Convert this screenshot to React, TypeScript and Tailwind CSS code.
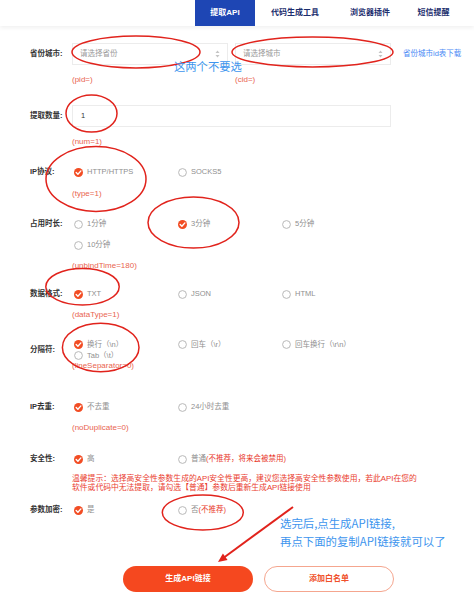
import React from 'react';

const BASE = "[font-family:'Liberation_Sans','Noto_Sans_CJK_SC',sans-serif]";
const NOTE = "[font-family:'Noto_Sans_CJK_SC',sans-serif]";

const tabs = [
  { name: '提取API', w: 'w-[60px]', active: true },
  { name: '代码生成工具', w: 'w-[80px]', active: false },
  { name: '浏览器插件', w: 'w-[70px]', active: false },
  { name: '短信提醒', w: 'w-[57px]', active: false },
];

function Radio({ checked, label, extra }: { checked?: boolean; label: string; extra?: React.ReactNode }) {
  return (
    <div className="flex items-center gap-[4px] pl-[2px]">
      {checked ? (
        <svg width="9" height="9" viewBox="0 0 9 9" className="shrink-0">
          <circle cx="4.5" cy="4.5" r="4.5" fill="#f24d24" />
          <path d="M2.2 4.6 L3.9 6.2 L6.9 2.9" stroke="#fff" strokeWidth="1.4" fill="none" strokeLinecap="round" strokeLinejoin="round" />
        </svg>
      ) : (
        <svg width="9" height="9" viewBox="0 0 9 9" className="shrink-0">
          <circle cx="4.5" cy="4.5" r="3.9" fill="#fff" stroke="#b8b8b8" strokeWidth="1" />
        </svg>
      )}
      <span className="text-[7.5px] text-[#8f8f8f] whitespace-nowrap">
        {label}
        {extra}
      </span>
    </div>
  );
}

function Label({ children }: { children: React.ReactNode }) {
  return (
    <div className="w-[42px] shrink-0 h-[12px] flex items-center text-[7.5px] font-bold text-[#333] whitespace-nowrap">
      {children}
    </div>
  );
}

function Hint({ children, className = '' }: { children: React.ReactNode; className?: string }) {
  return <div className={`pl-[42px] h-[12px] leading-[12px] text-[8px] text-[#e9644f] ${className}`}>{children}</div>;
}

function SelectBox({ placeholder }: { placeholder: string }) {
  return (
    <div className="w-[156px] h-[22px] border border-[#ececec] bg-white flex items-center justify-between pl-[7px] pr-[7px]">
      <span className="text-[7.5px] text-[#9a9a9a]">{placeholder}</span>
      <svg width="5" height="8" viewBox="0 0 5 8">
        <path d="M2.5 0.5 L4.5 3 L0.5 3 Z" fill="#c4c4c4" />
        <path d="M2.5 7.5 L4.5 5 L0.5 5 Z" fill="#c4c4c4" />
      </svg>
    </div>
  );
}

export default function App() {
  return (
    <div className={`relative w-[474px] h-[601px] overflow-hidden bg-white ${BASE}`}>
      {/* top nav */}
      <div className="h-[26px] flex pl-[195px] shadow-[0_2px_4px_rgba(0,0,0,0.06)]">
        {tabs.map((t) => (
          <div
            key={t.name}
            className={`${t.w} h-full flex items-center justify-center text-[8px] font-bold ${
              t.active ? 'bg-[#1e46b4] text-white' : 'text-[#1c2e6e]'
            }`}
          >
            {t.name}
          </div>
        ))}
      </div>

      <div className="px-[30px]">
        {/* province / city */}
        <div className="mt-[17px] flex items-center h-[22px]">
          <Label>省份城市:</Label>
          <div className="flex items-center gap-[7px]">
            <SelectBox placeholder="请选择省份" />
            <SelectBox placeholder="请选择城市" />
          </div>
          <span className="ml-[12px] text-[7.5px] text-[#4c8bf5] whitespace-nowrap">省份城市id表下载</span>
        </div>
        <Hint className="mt-[9px] flex">
          <span className="w-[163px]">(pid=)</span>
          <span>(cid=)</span>
        </Hint>

        {/* amount */}
        <div className="mt-[19px] flex items-center h-[22px]">
          <Label>提取数量:</Label>
          <div className="w-[319px] h-[22px] border border-[#ececec] flex items-center pl-[8px] text-[7.5px] text-[#333]">1</div>
        </div>
        <Hint className="mt-[9px]">(num=1)</Hint>

        {/* protocol */}
        <div className="mt-[18px] flex items-start">
          <Label>IP协议:</Label>
          <div className="grid grid-cols-[104px_104px_104px] h-[12px] items-center">
            <Radio checked label="HTTP/HTTPS" />
            <Radio label="SOCKS5" />
          </div>
        </div>
        <Hint className="mt-[10px]">(type=1)</Hint>

        {/* duration */}
        <div className="mt-[18px] flex items-start">
          <Label>占用时长:</Label>
          <div className="grid grid-cols-[104px_104px_104px] auto-rows-[12px] gap-y-[9px] items-center">
            <Radio label="1分钟" />
            <Radio checked label="3分钟" />
            <Radio label="5分钟" />
            <Radio label="10分钟" />
          </div>
        </div>
        <Hint className="mt-[9px]">(unbindTime=180)</Hint>

        {/* format */}
        <div className="mt-[16px] flex items-start">
          <Label>数据格式:</Label>
          <div className="grid grid-cols-[104px_104px_104px] h-[12px] items-center">
            <Radio checked label="TXT" />
            <Radio label="JSON" />
            <Radio label="HTML" />
          </div>
        </div>
        <Hint className="mt-[9px]">(dataType=1)</Hint>

        {/* separator */}
        <div className="mt-[18px] flex items-center">
          <Label>分隔符:</Label>
          <div className="grid grid-cols-[104px_104px_104px] auto-rows-[11px] items-center">
            <Radio checked label="换行（\n）" />
            <Radio label="回车（\r）" />
            <Radio label="回车换行（\r\n）" />
            <Radio label="Tab（\t）" />
          </div>
        </div>
        <div className="pl-[42px] h-[10px] leading-[10px] text-[8px] text-[#e9644f]">(lineSeparator=0)</div>

        {/* dedupe */}
        <div className="mt-[30px] flex items-start">
          <Label>IP去重:</Label>
          <div className="grid grid-cols-[104px_104px_104px] h-[12px] items-center">
            <Radio checked label="不去重" />
            <Radio label="24小时去重" />
          </div>
        </div>
        <Hint className="mt-[9px]">(noDuplicate=0)</Hint>

        {/* security */}
        <div className="mt-[19px] flex items-start">
          <Label>安全性:</Label>
          <div className="grid grid-cols-[104px_220px] h-[12px] items-center">
            <Radio checked label="高" />
            <Radio label="普通" extra={<span className="text-[#e8372a]">(不推荐，将来会被禁用)</span>} />
          </div>
        </div>
        <div className="mt-[9px] pl-[42px] text-[7.8px] leading-[9px] text-[#ea3d2f] whitespace-nowrap">
          <div>温馨提示：选择高安全性参数生成的API安全性更高，建议您选择高安全性参数使用，若此API在您的</div>
          <div>软件或代码中无法提取，请勾选【普通】参数后重新生成API链接使用</div>
        </div>

        {/* encryption */}
        <div className="mt-[12px] flex items-start">
          <Label>参数加密:</Label>
          <div className="grid grid-cols-[104px_104px] h-[12px] items-center">
            <Radio checked label="是" />
            <Radio label="否" extra={<span className="text-[#e8372a]">(不推荐)</span>} />
          </div>
        </div>
      </div>

      {/* actions */}
      <div className="mt-[50px] ml-[123px] flex gap-[11px]">
        <button className="w-[130px] h-[26px] rounded-full bg-[#f5481f] text-white text-[8px] font-bold">生成API链接</button>
        <button className="w-[130px] h-[26px] rounded-full border border-[#f5a68f] text-[#f0512b] text-[8px] font-bold">添加白名单</button>
      </div>

      {/* markup layer */}
      <svg className="absolute inset-0 pointer-events-none" width="474" height="601" viewBox="0 0 474 601">
        <g fill="none" stroke="#e1231c" strokeWidth="1.5">
          <ellipse cx="136" cy="52" rx="64" ry="16" />
          <ellipse cx="312.5" cy="52" rx="80.5" ry="15" />
          <ellipse cx="91.5" cy="113.5" rx="25.5" ry="18.5" />
          <ellipse cx="96" cy="179" rx="50" ry="32.5" />
          <ellipse cx="193.5" cy="222.5" rx="45.5" ry="25.5" />
          <ellipse cx="82.5" cy="286.7" rx="36.7" ry="18.3" />
          <ellipse cx="100.7" cy="347.5" rx="38.3" ry="24.2" />
          <ellipse cx="202.8" cy="512.5" rx="40.5" ry="17.5" />
          <line x1="293" y1="507" x2="224" y2="557.5" strokeWidth="2" />
        </g>
        <polygon points="218,562 227.6,559.9 222.9,553.5" fill="#e1231c" />
      </svg>
      <div className={`absolute left-[174px] top-[58px] text-[11.3px] leading-[16px] text-[#3d95ee] ${NOTE}`}>这两个不要选</div>
      <div className={`absolute left-[280px] top-[514px] text-[11.4px] leading-[18px] text-[#3d95ee] whitespace-nowrap ${NOTE}`}>
        <div>选完后,点生成API链接,</div>
        <div>再点下面的复制API链接就可以了</div>
      </div>
    </div>
  );
}
